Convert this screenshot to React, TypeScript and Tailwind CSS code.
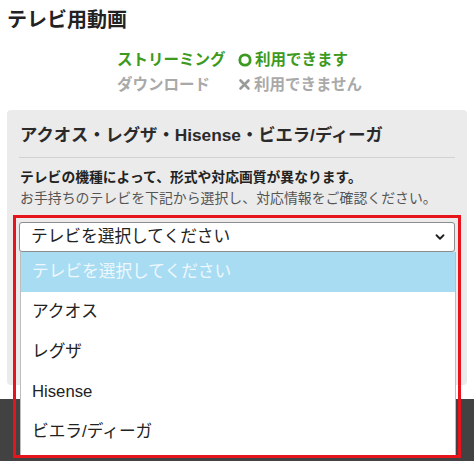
import React from 'react';
import { ChevronDown } from 'lucide-react';

const options = ['テレビを選択してください', 'アクオス', 'レグザ', 'Hisense', 'ビエラ/ディーガ'];

function CircleMark() {
  return (
    <svg width="14" height="14" viewBox="0 0 14 14" className="shrink-0">
      <circle cx="7" cy="7" r="5.2" fill="none" stroke="#3c9a20" strokeWidth="2.8" />
    </svg>
  );
}

function CrossMark() {
  return (
    <svg width="13" height="13" viewBox="0 0 13 13" className="shrink-0">
      <path d="M2.5 2.5 L10.5 10.5 M10.5 2.5 L2.5 10.5" stroke="#9a9a9a" strokeWidth="2.6" strokeLinecap="round" />
    </svg>
  );
}

export default function App() {
  return (
    <div className="w-[474px] h-[461px] overflow-hidden bg-white text-[#222] font-['Liberation_Sans','Noto_Sans_CJK_JP',sans-serif]">
      <h1 className="pl-[7px] pt-[6px] text-[20px] leading-[28px] font-bold text-[#222]">テレビ用動画</h1>

      {/* availability */}
      <div className="mt-[13px] ml-[117px] grid grid-cols-[121px_auto] text-[15.5px] leading-[25px] font-bold">
        <span className="text-[#3c9a20]">ストリーミング</span>
        <span className="flex items-center gap-[3px] text-[#3c9a20]">
          <CircleMark />
          利用できます
        </span>
        <span className="text-[#a9a9a9]">ダウンロード</span>
        <span className="flex items-center gap-[3px] text-[#a9a9a9]">
          <CrossMark />
          利用できません
        </span>
      </div>

      {/* tv box */}
      <div className="mt-[13px] mx-[7px] rounded-[4px] bg-[#ebebeb] px-[12px] pt-[13px] pb-[133px]">
        <h2 className="pl-[1px] text-[17.3px] leading-[24px] font-bold text-[#2a2a2a]">
          アクオス・レグザ・Hisense・ビエラ/ディーガ
        </h2>
        <div className="mt-[10px] h-px bg-[#d2d2d2]" />
        <p className="mt-[9px] pl-[1px] text-[13.8px] leading-[21px] font-bold text-[#222]">
          テレビの機種によって、形式や対応画質が異なります。
        </p>
        <p className="pl-[1px] text-[13.9px] leading-[21px] text-[#555]">
          お手持ちのテレビを下記から選択し、対応情報をご確認ください。
        </p>

        <div className="relative mt-[13px]">
          <div className="flex h-[30px] items-center justify-between rounded-[3px] border border-[#8c8c8c] bg-white pl-[11px] pr-[7px] shadow-[0_1px_1px_rgba(0,0,0,0.08)]">
            <span className="text-[16.7px] leading-[20px] text-[#222]">テレビを選択してください</span>
            <ChevronDown size={14} strokeWidth={3.2} color="#222" />
          </div>

          {/* open list */}
          <ul className="absolute left-[1px] right-[-1px] top-[30px] z-10 h-[203px] border-x border-[#bdbdbd] bg-white">
            {options.map((o, i) => (
              <li
                key={o}
                className={
                  i === 0
                    ? 'flex h-[40px] items-center bg-[#a8dcf3] pl-[11px] text-[16.7px] text-[#eef8fd]'
                    : 'flex h-[40px] items-center pl-[11px] text-[16.7px] text-[#222]'
                }
              >
                {o}
              </li>
            ))}
          </ul>

          {/* highlight frame */}
          <div className="pointer-events-none absolute left-[-6px] right-[-6px] top-[-7px] z-20 h-[243px] border-[3px] border-[#e8141c]" />
        </div>
      </div>

      <div className="mt-[14px] h-[62px] bg-[#424242]" />
    </div>
  );
}
